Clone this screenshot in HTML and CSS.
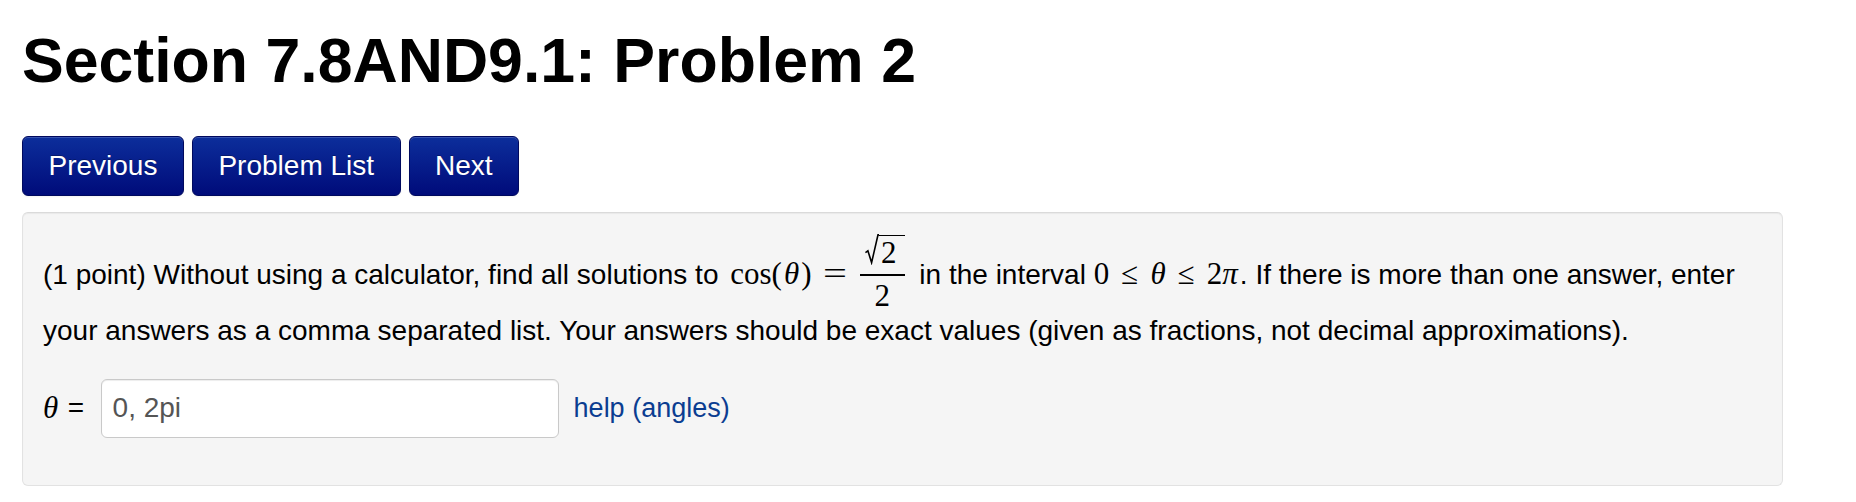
FILE: index.html
```html
<!DOCTYPE html>
<html lang="en">
<head>
<meta charset="utf-8">
<title>Section 7.8AND9.1: Problem 2</title>
<link rel="stylesheet" href="styles.css">
</head>
<body>
<div class="page">
  <h1 class="title">Section 7.8AND9.1: Problem 2</h1>
  <div class="nav">
    <a class="btn" href="#">Previous</a>
    <a class="btn" href="#">Problem List</a>
    <a class="btn" href="#">Next</a>
  </div>
  <div class="problem">
    <p class="stmt">(1 point) Without using a calculator, find all solutions to <span class="math"><span class="fn">cos</span>(<i class="arg">θ</i>)<span class="rel wide">=</span><span class="frac"><span class="num"><svg class="radical" width="14" height="31" viewBox="0 0 14 31"><path d="M0.4 18.6 L2.9 16.8 L6.6 28.6 L13.0 0.9 L14 0.9" fill="none" stroke="#000" stroke-width="1.6" stroke-linejoin="miter"/></svg><span class="radicand">2</span></span><span class="den">2</span></span></span> in the interval <span class="math">0<span class="rel">≤</span><i>θ</i><span class="rel">≤</span>2<i class="pi">π</i></span>. If there is more than one answer, enter your answers as a comma separated list. Your answers should be exact values (given as fractions, not decimal approximations).</p>
    <div class="answer">
      <span class="var"><i>θ</i></span>
      <span class="eq">=</span>
      <input class="ans" type="text" value="0, 2pi">
      <a class="help" href="#">help (angles)</a>
    </div>
  </div>
</div>
</body>
</html>
```
FILE: styles.css
```css
html, body {
  margin: 0;
  padding: 0;
  background: #fff;
}

.page {
  padding: 0 73px 0 22px;
  font-family: "Liberation Sans", Arial, Helvetica, sans-serif;
  color: #000;
}

.title {
  margin: 26px 0 0;
  font-size: 62.6px;
  line-height: 68px;
  font-weight: bold;
}

.nav {
  display: flex;
  gap: 8px;
  margin-top: 42px;
}

.btn {
  display: inline-flex;
  align-items: center;
  height: 60px;
  box-sizing: border-box;
  padding: 0 25.5px;
  font-size: 28px;
  color: #fff;
  text-decoration: none;
  background: linear-gradient(#0c2e9b, #000b7a);
  border: 1px solid #00095e;
  border-radius: 6px;
  box-shadow: inset 0 1px 0 rgba(255, 255, 255, 0.18), 0 1px 2px rgba(0, 0, 0, 0.05);
  text-shadow: 0 -1px 0 rgba(0, 0, 0, 0.25);
}

.problem {
  margin-top: 16px;
  background: #f5f5f5;
  border: 1px solid #e2e2e2;
  border-top-color: #dadada;
  border-radius: 6px;
  box-shadow: inset 0 1px 1px rgba(0, 0, 0, 0.05);
  padding: 20px 20px 47px;
}

.stmt {
  margin: 0 0 29px;
  font-size: 28px;
  line-height: 39px;
}

.math {
  font-family: "Liberation Serif", "Times New Roman", serif;
  font-size: 31px;
}

.math .fn {
  margin-left: 4px;
}

.math i {
  font-style: italic;
}

.math .arg {
  margin: 0 2px;
}

.math .pi {
  margin-right: 2px;
}

.rel {
  display: inline-block;
  width: 24px;
  margin: 0 8.6px;
  text-align: center;
}

.rel.wide {
  margin: 0 13px 0 11.6px;
  transform: scaleX(1.37);
}

.frac {
  display: inline-block;
  vertical-align: -22px;
  margin-right: 7px;
}

.num {
  display: block;
  padding: 0.5px 0 6px 5px;
  border-bottom: 2px solid #000;
  line-height: 30px;
}

.radical {
  vertical-align: -2px;
}

.radicand {
  display: inline-block;
  border-top: 1.6px solid #000;
  padding: 2px 8px 0 2px;
  line-height: 30px;
}

.den {
  display: block;
  padding-top: 5px;
  line-height: 30px;
  text-align: center;
}

.answer {
  display: flex;
  align-items: center;
  font-size: 28px;
}

.var {
  font-family: "Liberation Serif", "Times New Roman", serif;
  font-size: 31px;
  margin-right: 9.5px;
}

.eq {
  margin-right: 16.5px;
}

.ans {
  width: 458px;
  height: 59px;
  box-sizing: border-box;
  padding: 0 11px;
  margin: 0;
  font-family: "Liberation Sans", Arial, Helvetica, sans-serif;
  font-size: 28px;
  color: #555;
  background: #fff;
  border: 1.5px solid #c9c9c9;
  border-radius: 6px;
  box-shadow: inset 0 1px 1px rgba(0, 0, 0, 0.075);
  outline: none;
}

.help {
  margin-left: 15px;
  font-size: 27px;
  color: #0b3d91;
  text-decoration: none;
}
```
